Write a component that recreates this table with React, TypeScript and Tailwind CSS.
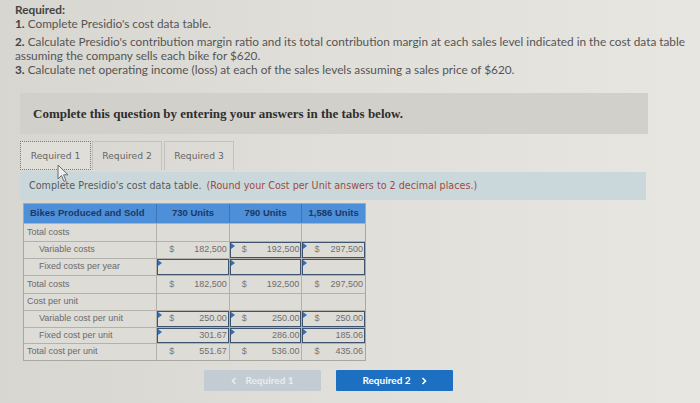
import React from "react";

type Cell = { d?: boolean; v?: string; input?: boolean } | null;
type Row = { label: string; indent?: boolean; h: string; cells: Cell[] };

const rows: Row[] = [
  { label: "Total costs", h: "h-[18px]", cells: [null, null, null] },
  {
    label: "Variable costs",
    indent: true,
    h: "h-[17px]",
    cells: [
      { d: true, v: "182,500" },
      { d: true, v: "192,500", input: true },
      { d: true, v: "297,500", input: true },
    ],
  },
  {
    label: "Fixed costs per year",
    indent: true,
    h: "h-[17px]",
    cells: [{ input: true }, { input: true }, { input: true }],
  },
  {
    label: "Total costs",
    h: "h-[18px]",
    cells: [
      { d: true, v: "182,500" },
      { d: true, v: "192,500" },
      { d: true, v: "297,500" },
    ],
  },
  { label: "Cost per unit", h: "h-[17px]", cells: [null, null, null] },
  {
    label: "Variable cost per unit",
    indent: true,
    h: "h-[17px]",
    cells: [
      { d: true, v: "250.00", input: true },
      { d: true, v: "250.00", input: true },
      { d: true, v: "250.00", input: true },
    ],
  },
  {
    label: "Fixed cost per unit",
    indent: true,
    h: "h-[16px]",
    cells: [
      { v: "301.67", input: true },
      { v: "286.00", input: true },
      { v: "185.06", input: true },
    ],
  },
  {
    label: "Total cost per unit",
    h: "h-[17px]",
    cells: [
      { d: true, v: "551.67" },
      { d: true, v: "536.00" },
      { d: true, v: "435.06" },
    ],
  },
];

const colW = ["w-[73px]", "w-[73px]", "w-[63px]"];

function ValueCell({ c, w }: { c: Cell; w: string }) {
  return (
    <div className={`${w} relative flex items-center border-r border-[#b3b1ac] last:border-r-0`}>
      {c && c.input ? (
        <div className="absolute inset-[0px] border border-[#3e536d]">
          <div className="absolute left-0 top-0 h-0 w-0 border-t-[3px] border-b-[3px] border-l-[4px] border-t-transparent border-b-transparent border-l-[#2f6fc0]" />
        </div>
      ) : null}
      {c ? (
        <div className="relative flex w-full items-center pl-[12px] pr-[2px]">
          <span className="text-[#7a7a7a]">{c.d ? "$" : ""}</span>
          <span className="ml-auto text-[#6e6e6e]">{c.v ?? ""}</span>
        </div>
      ) : null}
    </div>
  );
}

export default function App() {
  return (
    <div className="relative h-[403px] w-[700px] overflow-hidden bg-linear-to-r from-[#d8d6d0] via-[#e1dfda] to-[#e8e6e1]">
      {/* Required text */}
      <div
        className="whitespace-nowrap pl-[15px] text-[11.8px] leading-[14px] text-[#555]"
        style={{ fontFamily: "Lato, 'Open Sans', sans-serif" }}
      >
        <div className="mt-[3px] font-bold text-[#444]">Required:</div>
        <div>
          <span className="font-bold text-[#444]">1.</span> Complete Presidio's cost data table.
        </div>
        <div className="mt-[4px]">
          <span className="font-bold text-[#444]">2.</span> Calculate Presidio's contribution margin ratio and its total contribution margin at each sales level indicated in the cost data table
          <br />
          assuming the company sells each bike for $620.
        </div>
        <div>
          <span className="font-bold text-[#444]">3.</span> Calculate net operating income (loss) at each of the sales levels assuming a sales price of $620.
        </div>
      </div>

      {/* Instruction box */}
      <div className="ml-[20px] mt-[16px] flex h-[41px] w-[628px] items-center bg-[#d2d0cb] pl-[13px]">
        <span
          className="text-[13px] font-bold text-[#2e2e2e]"
          style={{ fontFamily: "'Liberation Serif', 'DejaVu Serif', serif" }}
        >
          Complete this question by entering your answers in the tabs below.
        </span>
      </div>

      {/* Tabs */}
      <div
        className="ml-[20px] mt-[7px] flex h-[29px] gap-[1px] text-[9.2px] text-[#666]"
        style={{ fontFamily: "'DejaVu Sans', Verdana, sans-serif" }}
      >
        <div className="flex w-[71px] items-center justify-center border border-dotted border-[#7a7a7a] bg-[#e0ded9]">
          Required 1
        </div>
        <div className="flex w-[70px] items-center justify-center border border-[#c4c2bd] border-b-0">
          Required 2
        </div>
        <div className="ml-[1px] flex w-[70px] items-center justify-center border border-[#c4c2bd] border-b-0">
          Required 3
        </div>
      </div>

      {/* Blue instruction bar */}
      <div
        className="ml-[20px] mt-[2px] flex h-[28px] w-[626px] items-center whitespace-nowrap bg-[#cad8db] pl-[9px] text-[9.6px]"
        style={{ fontFamily: "'DejaVu Sans', Verdana, sans-serif" }}
      >
        <span className="text-[#5a5a5a]">Complete Presidio's cost data table.</span>
        <span className="ml-[5px] text-[#a24a3e]">
          (Round your Cost per Unit answers to 2 decimal places.)
        </span>
      </div>

      {/* Table */}
      <div
        className="ml-[23px] mt-[3px] w-[343px] border border-[#a9a7a2] text-[9px]"
        style={{ fontFamily: "'Liberation Sans', Arial, sans-serif" }}
      >
        <div className="flex h-[19px] bg-[#4d8fd8] text-[9.5px] font-bold text-[#1c3866]">
          <div className="flex w-[134px] items-center border-r border-[#3d74b5] pl-[6px]">
            Bikes Produced and Sold
          </div>
          <div className="flex w-[73px] items-center justify-center border-r border-[#3d74b5]">730 Units</div>
          <div className="flex w-[73px] items-center justify-center border-r border-[#3d74b5]">790 Units</div>
          <div className="flex w-[63px] items-center justify-center">1,586 Units</div>
        </div>
        {rows.map((r, i) => (
          <div key={i} className={`flex ${r.h} border-t border-[#b3b1ac] bg-[#dedcd7]`}>
            <div
              className={`flex w-[134px] items-center border-r border-[#b3b1ac] text-[#6a6a6a] ${
                r.indent ? "pl-[15px]" : "pl-[3px]"
              }`}
            >
              {r.label}
            </div>
            {r.cells.map((c, j) => (
              <ValueCell key={j} c={c} w={colW[j]} />
            ))}
          </div>
        ))}
      </div>

      {/* Buttons */}
      <div
        className="ml-[204px] mt-[9px] flex gap-[15px] text-[10px] font-bold"
        style={{ fontFamily: "Lato, 'Open Sans', sans-serif" }}
      >
        <div className="flex h-[21px] w-[117px] items-center justify-center gap-[8px] rounded-[1px] bg-[#c3ccd3] text-[#e9edf0]">
          <svg width="6" height="8" viewBox="0 0 6 8">
            <path d="M4.5 1 L1.5 4 L4.5 7" stroke="#e9edf0" strokeWidth="1.6" fill="none" />
          </svg>
          <span>Required 1</span>
        </div>
        <div className="flex h-[21px] w-[117px] items-center justify-center gap-[10px] rounded-[1px] bg-[#1d6fc2] text-white">
          <span>Required 2</span>
          <svg width="6" height="8" viewBox="0 0 6 8">
            <path d="M1.5 1 L4.5 4 L1.5 7" stroke="#ffffff" strokeWidth="1.6" fill="none" />
          </svg>
        </div>
      </div>

      {/* Mouse cursor */}
      <svg className="absolute left-[57px] top-[164px]" width="12" height="20" viewBox="0 0 12 20">
        <path
          d="M1 1 L1 15 L4.5 11.5 L7 17.5 L9 16.6 L6.6 10.8 L11 10.8 Z"
          fill="#eeeeee"
          stroke="#6b6b6b"
          strokeWidth="1"
          strokeLinejoin="round"
        />
      </svg>
    </div>
  );
}
